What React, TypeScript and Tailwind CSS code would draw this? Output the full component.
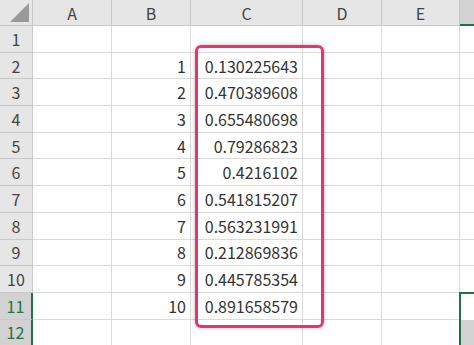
const cols = ["A", "B", "C", "D", "E"];

const values: (string | null)[][] = [
  [null, null],
  ["1", "0.130225643"],
  ["2", "0.470389608"],
  ["3", "0.655480698"],
  ["4", "0.79286823"],
  ["5", "0.4216102"],
  ["6", "0.541815207"],
  ["7", "0.563231991"],
  ["8", "0.212869836"],
  ["9", "0.445785354"],
  ["10", "0.891658579"],
  [null, null],
];

export default function App() {
  return (
    <div
      className="relative w-[474px] h-[345px] overflow-hidden bg-white text-[#333]"
      style={{ fontFamily: '"Noto Sans CJK JP", "Noto Sans", sans-serif' }}
    >
      <div className="grid grid-cols-[33px_79px_79px_112px_79px_78px_1fr] grid-rows-[26px_repeat(12,26.7px)]">
        {/* corner */}
        <div className="flex items-end justify-end pr-[3px] pb-[3px] bg-[#e6e6e6] border-r border-b border-[#c8c8c8]">
          <svg width="19" height="19" viewBox="0 0 19 19" className="block shrink-0">
            <path d="M19 0 L19 19 L0 19 Z" fill="#9a9a9a" />
          </svg>
        </div>
        {cols.map((c) => (
          <div
            key={c}
            className="bg-[#e6e6e6] border-r border-b border-[#c8c8c8] text-[16px] flex items-center justify-center text-[#444]"
          >
            {c}
          </div>
        ))}
        <div className="bg-[#d2d2d2] border-b-2 border-[#217346]" />
        {values.map((row, i) => {
          const sel = i >= 10;
          return [
            <div
              key={`h${i}`}
              className={`text-[16px] flex items-center justify-center border-b border-[#c8c8c8] ${
                sel
                  ? "bg-[#d2d2d2] text-[#217346] border-r-2 border-r-[#217346]"
                  : "bg-[#e6e6e6] text-[#444] border-r border-r-[#c8c8c8]"
              }`}
            >
              {i + 1}
            </div>,
            <div key={`a${i}`} className="border-r border-b border-[#dadada]" />,
            <div key={`b${i}`} className="border-r border-b border-[#dadada] text-[16px] flex items-center justify-end pr-[4px]">
              {row[0]}
            </div>,
            <div key={`c${i}`} className="border-r border-b border-[#dadada] text-[16px] flex items-center justify-end pr-[4px]">
              {row[1]}
            </div>,
            <div key={`d${i}`} className="border-r border-b border-[#dadada]" />,
            <div key={`e${i}`} className="border-r border-b border-[#dadada]" />,
            <div
              key={`f${i}`}
              className={`border-b border-[#dadada] ${i === 11 ? "bg-[#d2d2d2]" : ""}`}
            />,
          ];
        })}
      </div>

      {/* highlight box */}
      <div className="absolute left-[195px] top-[45px] w-[129px] h-[283px] border-[3px] border-[#e8336d] rounded-[6px] shadow-[0_0_4px_rgba(0,0,0,0.25)]" />

      {/* active cell */}
      <div className="absolute left-[459px] top-[292px] w-[20px] h-[60px] border-2 border-[#217346]" />
      <div className="absolute left-[461px] top-[294px] w-[20px] h-[26px] bg-white" />
    </div>
  );
}
